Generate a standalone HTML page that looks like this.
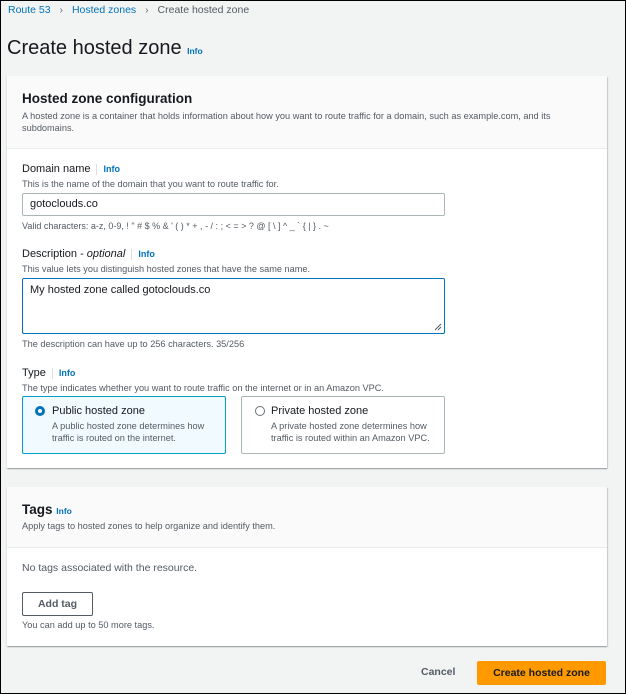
<!DOCTYPE html>
<html><head><meta charset="utf-8"><style>
*{box-sizing:border-box;margin:0;padding:0}
body{width:626px;height:694px;background:#f2f3f3;font-family:"Liberation Sans",sans-serif;color:#16191f;position:relative;overflow:hidden;border:1px solid #000}
.a{position:absolute;white-space:nowrap}
.link{color:#0073bb}
.info{color:#0073bb;font-weight:bold;font-size:9px}
.sm{font-size:9.2px;color:#545b64}
.panel{position:absolute;background:#fff;box-shadow:0 1px 1px rgba(0,28,36,.3),1px 1px 1px rgba(0,28,36,.15);}
.lbl{font-size:11px}
.sep{display:inline-block;width:1px;height:11px;background:#ddd;vertical-align:middle;margin:0 6px}
.input{position:absolute;background:#fff;border:1px solid #aab7b8;border-radius:2px;font-size:11px;padding:0 7px}
</style></head><body>
<div class="a" style="left:7px;top:3px;font-size:10.5px"><span class="link">Route 53</span> <span style="color:#687078;margin:0 6px">&#x203A;</span> <span class="link">Hosted zones</span> <span style="color:#687078;margin:0 6px">&#x203A;</span> <span style="color:#545b64">Create hosted zone</span></div>
<div class="a" style="left:6px;top:36px;font-size:20px">Create hosted zone <span class="info" style="font-size:8.5px">Info</span></div>

<div class="panel" style="left:6px;top:75px;width:600px;height:392px">
 <div style="background:#fafafa;height:73px;border-bottom:1px solid #eaeded"></div>
 <div class="a" style="left:15px;top:15px;font-size:13.5px;font-weight:bold">Hosted zone configuration</div>
 <div class="a sm" style="left:15px;top:34px;white-space:normal;width:545px;line-height:12px">A hosted zone is a container that holds information about how you want to route traffic for a domain, such as example.com, and its subdomains.</div>
 <div class="a lbl" style="left:15px;top:87px">Domain name<span class="sep"></span><span class="info">Info</span></div>
 <div class="a sm" style="left:15px;top:103px">This is the name of the domain that you want to route traffic for.</div>
 <div class="input" style="left:15px;top:117px;width:423px;height:23px;line-height:21px">gotoclouds.co</div>
 <div class="a sm" style="left:15px;top:145px;font-size:9px">Valid characters: a-z, 0-9, ! " # $ % &amp; ' ( ) * + , - / : ; &lt; = &gt; ? @ [ \ ] ^ _ ` { | } . ~</div>
 <div class="a lbl" style="left:15px;top:172px">Description - <i>optional</i><span class="sep"></span><span class="info">Info</span></div>
 <div class="a sm" style="left:15px;top:188px">This value lets you distinguish hosted zones that have the same name.</div>
 <div class="input" style="left:15px;top:202px;width:423px;height:56px;border:1.5px solid #0073bb;padding-top:5px">My hosted zone called gotoclouds.co
  <svg style="position:absolute;right:2px;bottom:2px" width="8" height="8"><path d="M1 7L7 1M4 7L7 4" stroke="#545b64" stroke-width="1"/></svg></div>
 <div class="a sm" style="left:15px;top:263px">The description can have up to 256 characters. 35/256</div>
 <div class="a lbl" style="left:15px;top:291px">Type<span class="sep"></span><span class="info">Info</span></div>
 <div class="a sm" style="left:15px;top:307px">The type indicates whether you want to route traffic on the internet or in an Amazon VPC.</div>
 <div class="a" style="left:15px;top:320px;width:204px;height:58px;background:#f1faff;border:1px solid #00a1c9;border-radius:2px"></div>
 <div class="a" style="left:28px;top:330px;width:10px;height:10px;border-radius:50%;border:3px solid #0073bb;background:#fff"></div>
 <div class="a lbl" style="left:45px;top:329px">Public hosted zone</div>
 <div class="a sm" style="left:45px;top:344px;line-height:12px">A public hosted zone determines how<br>traffic is routed on the internet.</div>
 <div class="a" style="left:234px;top:320px;width:204px;height:58px;border:1px solid #aab7b8;border-radius:2px"></div>
 <div class="a" style="left:248px;top:330px;width:10px;height:10px;border-radius:50%;border:1px solid #687078;background:#fff"></div>
 <div class="a lbl" style="left:264px;top:329px">Private hosted zone</div>
 <div class="a sm" style="left:264px;top:344px;line-height:12px">A private hosted zone determines how<br>traffic is routed within an Amazon VPC.</div>
</div>

<div class="panel" style="left:6px;top:486px;width:600px;height:159px">
 <div style="background:#fafafa;height:61px;border-bottom:1px solid #eaeded"></div>
 <div class="a" style="left:15px;top:15px;font-size:13.5px;font-weight:bold">Tags <span class="info" style="font-size:8.5px">Info</span></div>
 <div class="a sm" style="left:15px;top:34px">Apply tags to hosted zones to help organize and identify them.</div>
 <div class="a" style="left:15px;top:75px;font-size:10.5px;color:#545b64">No tags associated with the resource.</div>
 <div class="a" style="left:15px;top:105px;width:71px;height:24px;border:1px solid #545b64;border-radius:2px;font-size:10.5px;font-weight:bold;color:#545b64;text-align:center;line-height:22px">Add tag</div>
 <div class="a sm" style="left:15px;top:133px">You can add up to 50 more tags.</div>
</div>

<div class="a" style="left:420px;top:665px;font-size:10.5px;font-weight:bold;color:#545b64">Cancel</div>
<div class="a" style="left:476px;top:660px;width:129px;height:24px;background:#f90;border-radius:2px;font-size:10.5px;font-weight:bold;color:#16191f;text-align:center;line-height:24px">Create hosted zone</div>
</body></html>
